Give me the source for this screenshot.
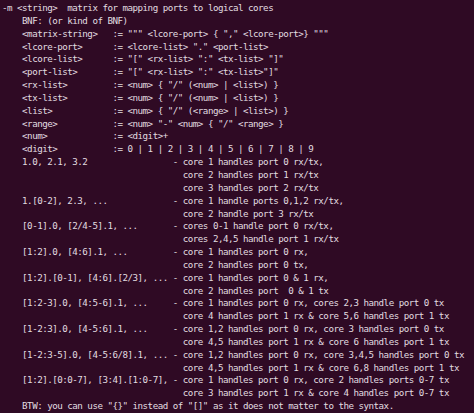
import React from 'react';

// Help text for the -m option, as printed in the terminal
const lines: string[] = [
  '-m <string>  matrix for mapping ports to logical cores',
  '    BNF: (or kind of BNF)',
  '    <matrix-string>   := """ <lcore-port> { "," <lcore-port>} """',
  '    <lcore-port>      := <lcore-list> "." <port-list>',
  '    <lcore-list>      := "[" <rx-list> ":" <tx-list> "]"',
  '    <port-list>       := "[" <rx-list> ":" <tx-list>"]"',
  '    <rx-list>         := <num> { "/" (<num> | <list>) }',
  '    <tx-list>         := <num> { "/" (<num> | <list>) }',
  '    <list>            := <num> { "/" (<range> | <list>) }',
  '    <range>           := <num> "-" <num> { "/" <range> }',
  '    <num>             := <digit>+',
  '    <digit>           := 0 | 1 | 2 | 3 | 4 | 5 | 6 | 7 | 8 | 9',
  '    1.0, 2.1, 3.2                 - core 1 handles port 0 rx/tx,',
  '                                    core 2 handles port 1 rx/tx',
  '                                    core 3 handles port 2 rx/tx',
  '    1.[0-2], 2.3, ...             - core 1 handle ports 0,1,2 rx/tx,',
  '                                    core 2 handle port 3 rx/tx',
  '    [0-1].0, [2/4-5].1, ...       - cores 0-1 handle port 0 rx/tx,',
  '                                    cores 2,4,5 handle port 1 rx/tx',
  '    [1:2].0, [4:6].1, ...         - core 1 handles port 0 rx,',
  '                                    core 2 handles port 0 tx,',
  '    [1:2].[0-1], [4:6].[2/3], ... - core 1 handles port 0 & 1 rx,',
  '                                    core 2 handles port  0 & 1 tx',
  '    [1:2-3].0, [4:5-6].1, ...     - core 1 handles port 0 rx, cores 2,3 handle port 0 tx',
  '                                    core 4 handles port 1 rx & core 5,6 handles port 1 tx',
  '    [1-2:3].0, [4-5:6].1, ...     - core 1,2 handles port 0 rx, core 3 handles port 0 tx',
  '                                    core 4,5 handles port 1 rx & core 6 handles port 1 tx',
  '    [1-2:3-5].0, [4-5:6/8].1, ... - core 1,2 handles port 0 rx, core 3,4,5 handles port 0 tx',
  '                                    core 4,5 handles port 1 rx & core 6,8 handles port 1 tx',
  '    [1:2].[0:0-7], [3:4].[1:0-7], - core 1 handles port 0 rx, core 2 handles ports 0-7 tx',
  '                                    core 3 handles port 1 rx & core 4 handles port 0-7 tx',
  '    BTW: you can use "{}" instead of "[]" as it does not matter to the syntax.',
];

export default function App() {
  return (
    <div className="w-[474px] h-[413px] overflow-hidden bg-[#2f0a24]">
      <pre className="pl-[2px] pt-[2px] whitespace-pre text-[9.2px] leading-[12.85px] tracking-[-0.51px] text-[#e2dde0] font-['DejaVu_Sans_Mono',monospace]">
        {lines.join('\n')}
      </pre>
    </div>
  );
}
